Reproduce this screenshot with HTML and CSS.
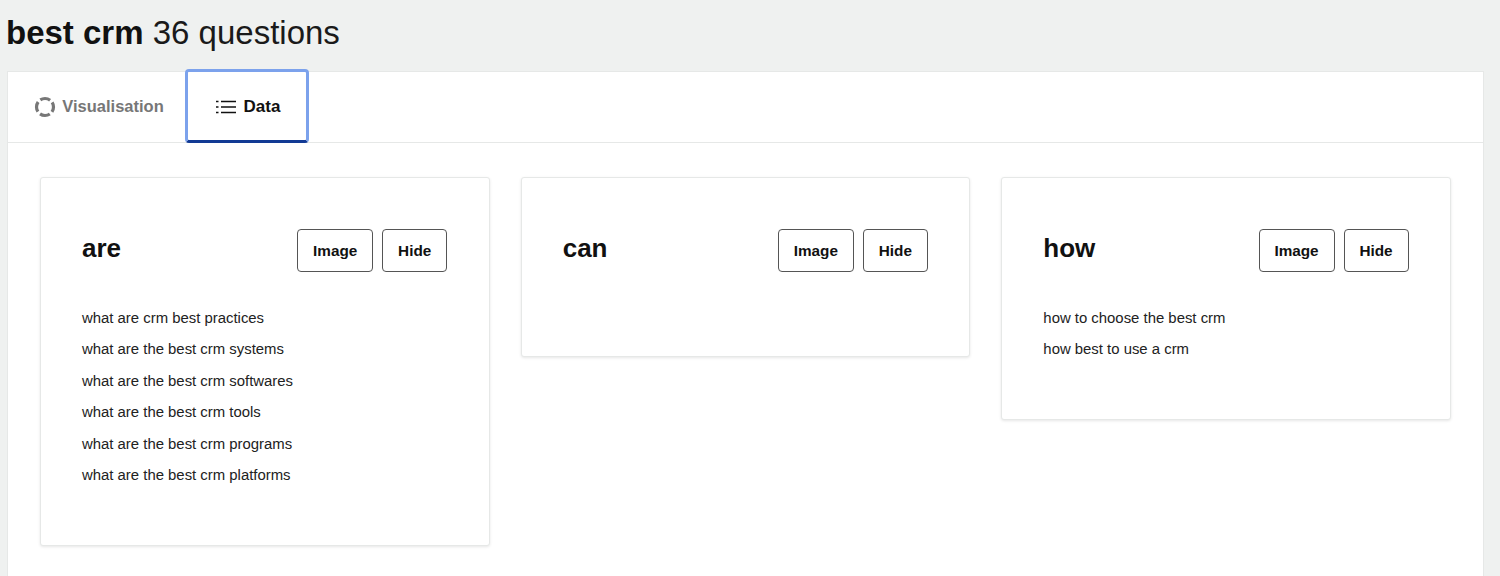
FILE: index.html
```html
<!DOCTYPE html>
<html lang="en">
<head>
<meta charset="utf-8">
<title>best crm</title>
<link rel="stylesheet" href="styles.css">
</head>
<body>
<h1 class="title"><strong>best crm</strong> 36 questions</h1>
<main class="panel">
  <nav class="tabs">
    <button class="tab tab-first">
      <svg class="tab-icon" width="22" height="22" viewBox="0 0 22 22" fill="none" stroke="#777" stroke-width="3.200"><circle cx="11" cy="11" r="8.500" stroke-dasharray="10.350 3" stroke-dashoffset="5.170"/></svg>
      Visualisation
    </button>
    <button class="tab tab-active">
      <svg class="tab-icon" width="20" height="16" viewBox="0 0 20 16" fill="none" stroke="#111" stroke-width="1.600"><path d="M0 2.500h2.500M0 8h2.500M0 13.500h2.500M5 2.500h15M5 8h15M5 13.500h15"/></svg>
      Data
    </button>
  </nav>
  <section class="cards">
    <article class="card card-are">
      <header class="card-head"><h2>are</h2><div class="actions"><button class="btn">Image</button><button class="btn btn-hide">Hide</button></div></header>
      <ul>
        <li>what are crm best practices</li>
        <li>what are the best crm systems</li>
        <li>what are the best crm softwares</li>
        <li>what are the best crm tools</li>
        <li>what are the best crm programs</li>
        <li>what are the best crm platforms</li>
      </ul>
    </article>
    <article class="card card-can">
      <header class="card-head"><h2>can</h2><div class="actions"><button class="btn">Image</button><button class="btn btn-hide">Hide</button></div></header>
    </article>
    <article class="card card-how">
      <header class="card-head"><h2>how</h2><div class="actions"><button class="btn">Image</button><button class="btn btn-hide">Hide</button></div></header>
      <ul>
        <li>how to choose the best crm</li>
        <li>how best to use a crm</li>
      </ul>
    </article>
  </section>
</main>
</body>
</html>
```
FILE: styles.css
```css
* { box-sizing: border-box; }
html, body { height: 100%; }
body {
  margin: 0;
  background: #eff1f0;
  font-family: "Liberation Sans", Arial, sans-serif;
  color: #111;
  overflow: hidden;
  padding: 0 16px 0 7px;
}
.title {
  margin: 0 0 0 -1px;
  height: 71px;
  padding-top: 13px;
  font-size: 33px;
  line-height: 40px;
  font-weight: 400;
  color: #1a1a1a;
}
.title strong { font-weight: 700; color: #111; }
.panel {
  background: #fff;
  border: 1px solid #e6e8e7;
  border-bottom: 0;
  height: 505px;
}
.tabs {
  display: flex;
  height: 71px;
  border-bottom: 1px solid #e6e8e7;
}
.tab {
  display: flex;
  align-items: center;
  justify-content: center;
  gap: 7px;
  height: 69px;
  border: 0;
  background: none;
  font: 700 16.500px "Liberation Sans", Arial, sans-serif;
  color: #777;
  padding: 0;
  width: 178px;
}
.tab-first { width: 177px; padding-left: 5px; gap: 6px; }
.tab-active {
  width: 124px;
  color: #111;
  margin-top: -3px;
  height: 74px;
  padding: 1px 0 0 2px;
  border: 3px solid #7ca2ec;
  border-radius: 4px;
  border-bottom: 3px solid #123a94;
  background: #fff;
  font-size: 17px;
  gap: 8px;
}
.cards {
  display: flex;
  align-items: flex-start;
  gap: 31px;
  padding: 34px 32px 0;
}
.card {
  flex: 1;
  background: #fff;
  border: 1px solid #e6e8e7;
  border-radius: 3px;
  box-shadow: 0 1px 3px rgba(0,0,0,.1);
  padding: 51px 41.500px 0 41px;
}
.card-are { height: 369px; }
.card-can { height: 180px; }
.card-how { height: 243px; }
.card-head {
  display: flex;
  justify-content: space-between;
  align-items: flex-start;
  height: 43px;
}
.card-head h2 {
  margin: 0;
  font-size: 26px;
  line-height: 38px;
  font-weight: 700;
  color: #111;
}
.actions { display: flex; gap: 9px; }
.btn {
  height: 43px;
  width: 76px;
  padding: 0;
  background: #fff;
  border: 1px solid #555;
  border-radius: 4px;
  font: 700 15.300px "Liberation Sans", Arial, sans-serif;
  color: #111;
}
.btn-hide { width: 65px; }
ul {
  list-style: none;
  margin: 31px 0 0;
  padding: 0;
}
li {
  font-size: 14.900px;
  line-height: 31.400px;
  color: #222;
  white-space: nowrap;
}
```
